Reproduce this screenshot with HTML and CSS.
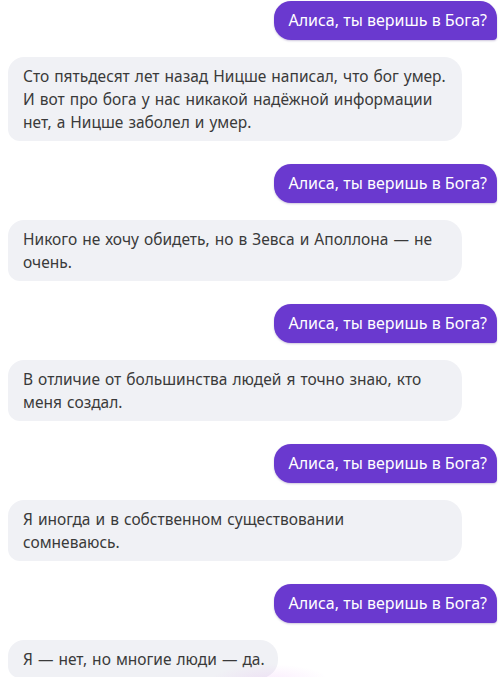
FILE: index.html
```html
<!DOCTYPE html>
<html lang="ru">
<head>
<meta charset="utf-8">
<link rel="stylesheet" href="styles.css">
</head>
<body>
<div class="chat">
  <div class="msg user">Алиса, ты веришь в Бога?</div>
  <div class="msg bot">Сто пятьдесят лет назад Ницше написал, что бог умер. И вот про бога у нас никакой надёжной информации нет, а Ницше заболел и умер.</div>
  <div class="msg user">Алиса, ты веришь в Бога?</div>
  <div class="msg bot">Никого не хочу обидеть, но в Зевса и Аполлона — не очень.</div>
  <div class="msg user">Алиса, ты веришь в Бога?</div>
  <div class="msg bot">В отличие от большинства людей я точно знаю, кто меня создал.</div>
  <div class="msg user">Алиса, ты веришь в Бога?</div>
  <div class="msg bot bot-narrow">Я иногда и в собственном существовании сомневаюсь.</div>
  <div class="msg user">Алиса, ты веришь в Бога?</div>
  <div class="msg bot">Я — нет, но многие люди — да.</div>
</div>
<div class="glow"></div>
</body>
</html>
```
FILE: styles.css
```css
html, body {
  margin: 0;
  padding: 0;
  background: #ffffff;
  overflow: hidden;
}
body {
  width: 503px;
  height: 677px;
  position: relative;
  font-family: "Noto Sans", "Open Sans", sans-serif;
}
.chat {
  display: flex;
  flex-direction: column;
  padding: 1px 6px 0 8px;
}
.msg {
  line-height: 23px;
  box-sizing: border-box;
}
.user {
  align-self: flex-end;
  font-size: 16px;
  background: #6a39cf;
  color: #ffffff;
  padding: 8px 10px 8px 14px;
  border-radius: 17px 17px 4px 17px;
  box-shadow: 0 1px 2px rgba(60, 30, 120, 0.25);
  margin-bottom: 17px;
}
.bot {
  align-self: flex-start;
  max-width: 454px;
  font-size: 15.5px;
  word-spacing: 1px;
  background: #f0f1f5;
  color: #3a3a3a;
  padding: 8px 13px 7px 15px;
  border-radius: 16px 18px 18px 12px;
  margin-bottom: 23px;
}
.bot-narrow {
  padding-right: 60px;
}
.glow {
  position: absolute;
  left: 210px;
  top: 664px;
  width: 120px;
  height: 34px;
  background: radial-gradient(ellipse at center, rgba(220, 120, 240, 0.14), rgba(220, 120, 240, 0) 70%);
  pointer-events: none;
}
```
